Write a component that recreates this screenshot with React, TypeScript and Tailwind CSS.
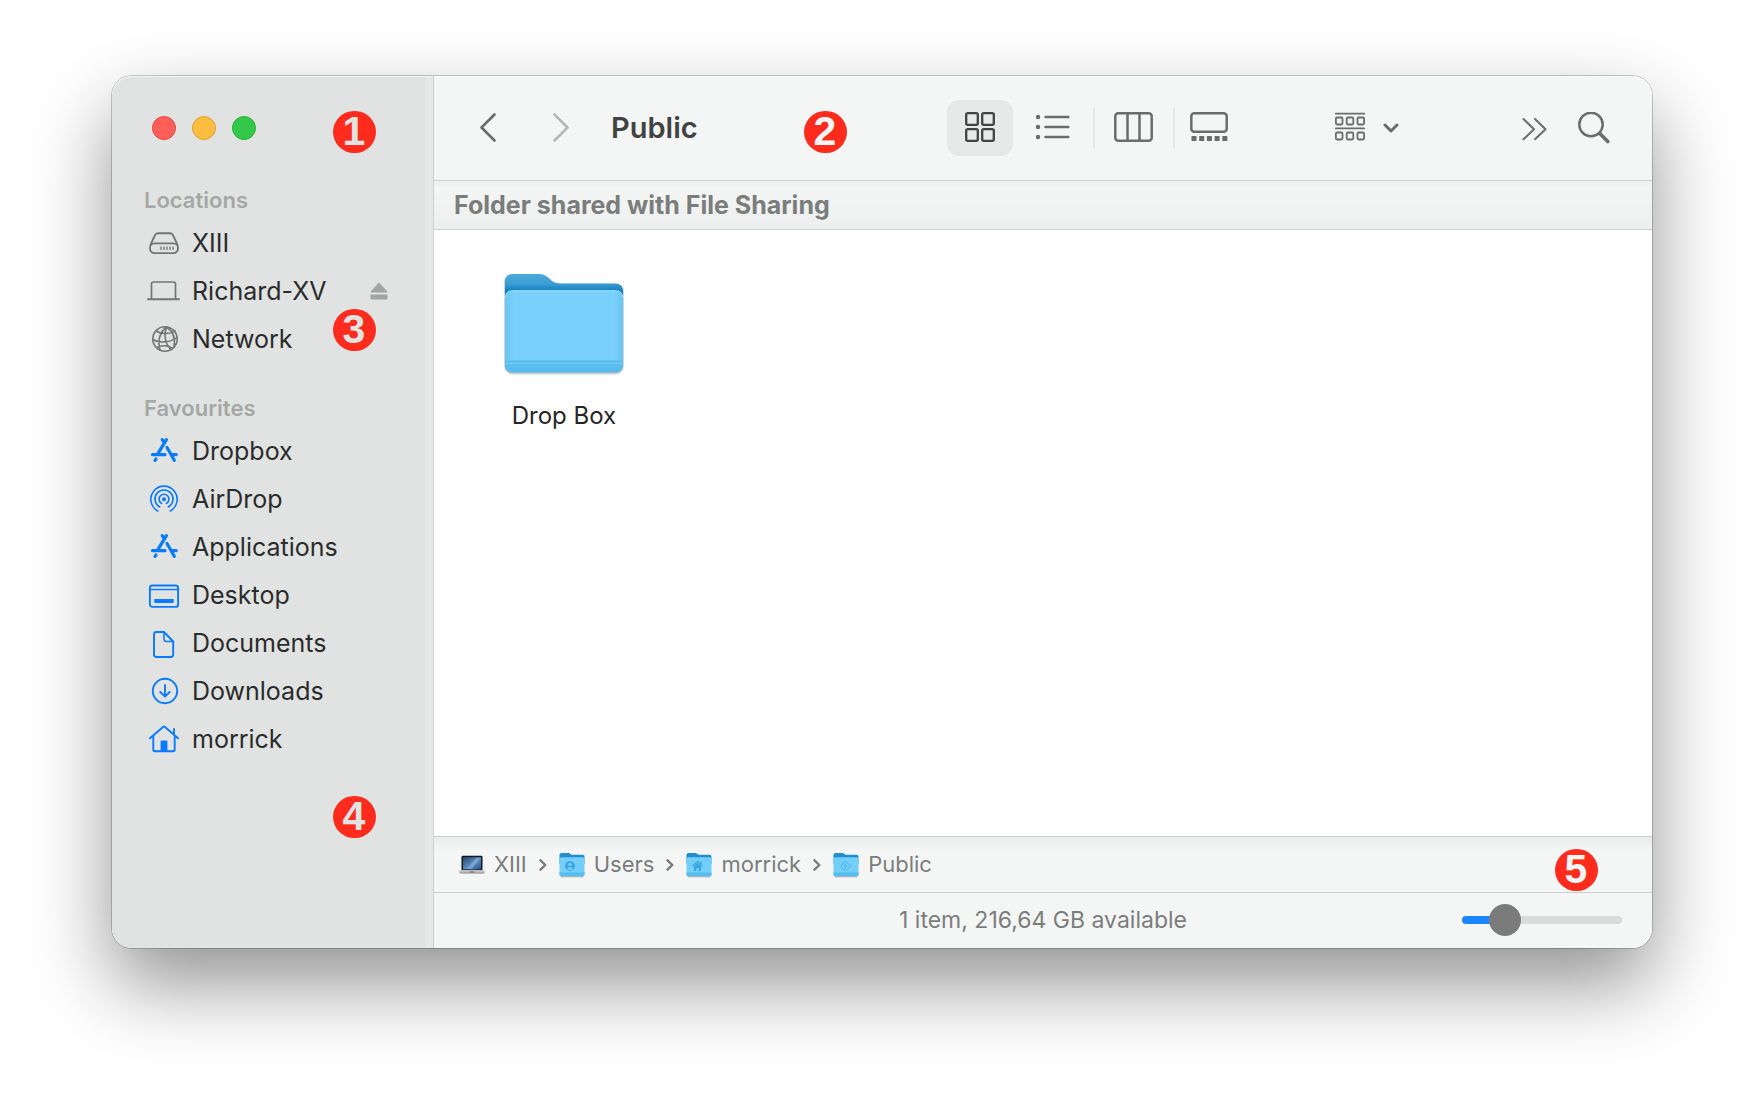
import { useState } from "react";
import type { ReactNode } from "react";

const stroke = {
  fill: "none",
  stroke: "currentColor",
  strokeLinecap: "round" as const,
  strokeLinejoin: "round" as const,
};

function SideIcon({ children }: { children: ReactNode }) {
  return (
    <svg viewBox="0 0 32 32" className="size-8 shrink-0 overflow-visible" strokeWidth="1.9" {...stroke} aria-hidden="true">
      {children}
    </svg>
  );
}

const driveIcon = (
  <SideIcon>
    <path d="M2.6 17.6 7 8.2Q7.9 6.2 10 6.2h12q2.1 0 3 2l4.400 9.400" />
    <rect x="2" y="16.400" width="28" height="9.700" rx="4.500" />
    <path d="M13 19.500v3.500M16 19.500v3.500M19 19.500v3.500M22 19.500v3.500M25 19.500v3.500" strokeWidth="1.300" strokeLinecap="butt" />
  </SideIcon>
);

const laptopIcon = (
  <SideIcon>
    <path d="M3.500 24V9Q3.500 7 5.500 7h20q2 0 2 2v15" strokeWidth="1.700" />
    <path d="M0 24.200h31" strokeWidth="2" />
  </SideIcon>
);

const globeIcon = (
  <SideIcon>
    <g strokeWidth="1.600">
      <circle cx="17" cy="16" r="12.200" />
      <path d="M18.500 4C12 9 9.500 17 12 27.200M18.500 4C15.500 12 17 21 23 26.500M18.500 4C25 8 27.500 15 26 24M8 8c5 3.500 14 3.500 19-.500M5 16.500c6 4 18 3 24-2M8.500 24.500c5-2.500 12-2.500 16 .800" />
    </g>
  </SideIcon>
);

const appsIcon = (
  <SideIcon>
    <g strokeWidth="3.200">
      <path d="M18.400 4.600 9.600 19.200M14.200 4.600l2.200 3.400M19 12.500l7.300 12.800" />
      <path d="M4.500 19.700h12.500M24 19.700h4.200M8 24 7 25.400" />
    </g>
  </SideIcon>
);

const airdropIcon = (
  <SideIcon>
    <circle cx="16" cy="16.300" r="2" fill="currentColor" stroke="none" />
    <g strokeWidth="1.600">
      <path d="M13.600 20.400a4.900 4.900 0 1 1 4.800 0" />
      <path d="M11.800 24a9 9 0 1 1 8.400 0" />
      <path d="M9.800 28a13.200 13.200 0 1 1 12.400 0" />
    </g>
  </SideIcon>
);

const desktopIcon = (
  <SideIcon>
    <rect x="1.900" y="6.500" width="28.200" height="21.400" rx="2.400" />
    <path d="M2 10.500h28" strokeWidth="1.500" />
    <rect x="6.300" y="20" width="19.400" height="4" rx="0.600" fill="currentColor" stroke="none" />
  </SideIcon>
);

const documentIcon = (
  <SideIcon>
    <path d="M6 7.500Q6 5 8.500 5H16l9.200 9.500V27.500q0 2.500-2.500 2.500H8.500Q6 30 6 27.500Z" />
    <path d="M16 5v7q0 2.500 2.500 2.500h6.500" strokeWidth="1.500" />
  </SideIcon>
);

const downloadIcon = (
  <SideIcon>
    <circle cx="17" cy="16" r="12.200" />
    <path d="M17 10v11.500M12.300 17l4.700 4.700 4.700-4.700" />
  </SideIcon>
);

const homeIcon = (
  <SideIcon>
    <path d="M2 15.300 15 4q1-.8 2 0l13 11.300" />
    <path d="M5.300 13.500V26.500q0 1.700 1.700 1.700h18q1.700 0 1.700-1.700V13.500M26 11.500V6" />
    <path d="M12.600 28V18.500q0-.900.900-.900h5q.900 0 .900.900V28Z" fill="currentColor" stroke="none" />
  </SideIcon>
);

function SidebarRow({ icon, label, eject }: { icon: ReactNode; label: string; eject?: boolean }) {
  return (
    <li className="flex h-12 items-center pr-[45px]">
      <a href={"#" + label} className="flex flex-1 items-center gap-3 text-[#2b2c2c]">
        {icon}
        <span className="pt-0.5 whitespace-nowrap">{label}</span>
      </a>
      {eject && (
        <button type="button" aria-label={"Eject " + label} className="text-[#a3a5a4]">
          <svg viewBox="0 0 18 18" className="size-[18px]" fill="currentColor" aria-hidden="true">
            <path d="M9 0.600 17.300 9.500q.3 1-.6 1H1.300q-.9 0-.6-1Z" />
            <rect x="0.500" y="12.500" width="17" height="5" rx="0.800" />
          </svg>
        </button>
      )}
    </li>
  );
}

function SidebarSection({ title, icons, children }: { title: string; icons: string; children: ReactNode }) {
  return (
    <section>
      <h2 className="flex h-[38px] items-center pl-8 text-[22px] font-semibold text-[#a5a7a6]">{title}</h2>
      <ul className={"pl-9 text-[25px] [&_a>svg]:shrink-0 " + icons}>{children}</ul>
    </section>
  );
}

function MiniFolder({ children }: { children: ReactNode }) {
  return (
    <svg viewBox="0 0 26 26" className="size-[26px]" aria-hidden="true">
      <path d="M.5 3Q.5 1 2.500 1h7.500l2.500 1.800h11q2 0 2 2V12H.5Z" fill="#1f8fce" />
      <rect x="0.500" y="5.300" width="25" height="19" rx="1.800" fill="#73cefa" />
      <path d="M.5 20.500h25v2q0 1.800-1.800 1.800H2.300Q.5 24.300.5 22.500Z" fill="#58bdee" />
      <path d="M1.500 24.800h23" stroke="#8a9aa2" strokeWidth="0.800" />
      {children}
    </svg>
  );
}

const usersFolder = (
  <MiniFolder>
    <circle cx="11" cy="14" r="5" fill="#3ba6e0" />
    <circle cx="11" cy="12.400" r="1.700" fill="#73cefa" />
    <path d="M8 17q3-4 6 0-3 2.400-6 0Z" fill="#73cefa" />
  </MiniFolder>
);

const homeFolder = (
  <MiniFolder>
    <path d="M6.500 14.200 11.500 9.300l5 4.900M15 12V9.500" fill="none" stroke="#3ba6e0" strokeWidth="1.200" />
    <path d="M8 14l3.500-3.300L15 14v5h-2.300v-3h-2.400v3H8Z" fill="#3ba6e0" />
  </MiniFolder>
);

const publicFolder = (
  <MiniFolder>
    <path d="M12.500 9l5 5-5 5-5-5Z" fill="none" stroke="#4fb3e8" strokeWidth="1" strokeLinejoin="round" />
    <path d="M12.500 11.500v5M11 13.500l1.500-1 1.500 1.500-3 1" fill="none" stroke="#4fb3e8" strokeWidth="0.800" />
  </MiniFolder>
);

const macbookIcon = (
  <svg viewBox="0 0 26 20" className="h-5 w-[26px]" aria-hidden="true">
    <defs>
      <linearGradient id="screen" x1="0" y1="0" x2="1" y2="1">
        <stop offset="0" stopColor="#27436b" />
        <stop offset="0.550" stopColor="#5b8fc4" />
        <stop offset="1" stopColor="#2a4d80" />
      </linearGradient>
    </defs>
    <rect x="2.500" y="0.800" width="21" height="14.700" rx="1.200" fill="#15181c" />
    <rect x="4" y="2.200" width="18" height="12.300" fill="url(#screen)" />
    <path d="M8 14 17 3h4l-8 11Z" fill="#a9cbe8" opacity="0.400" />
    <path d="M.3 15.500h25.400v1.500q0 1.700-1.700 1.700H2Q.3 18.700.3 17Z" fill="#a9aaac" />
    <path d="M.3 15.500h25.400v1H.3Z" fill="#dcdddd" />
    <path d="M10.500 17h5" stroke="#666" strokeWidth="1" />
  </svg>
);

function PathChevron() {
  return (
    <svg viewBox="0 0 8 12" className="h-3 w-2" strokeWidth="2.400" {...stroke} aria-hidden="true">
      <path d="M1.500 1.300 6.300 6l-4.800 4.700" />
    </svg>
  );
}

function Crumb({ icon, label }: { icon: ReactNode; label: string }) {
  return (
    <a href={"#" + label} className="flex items-center gap-[9px]">
      {icon}
      <span>{label}</span>
    </a>
  );
}

function BigFolder() {
  return (
    <svg viewBox="0 0 120 104" className="h-[104px] w-[120px]" aria-hidden="true">
      <defs>
        <linearGradient id="back" x1="0" y1="0" x2="0" y2="1">
          <stop offset="0" stopColor="#4ba9da" />
          <stop offset="0.160" stopColor="#3d9fd4" />
          <stop offset="0.280" stopColor="#1680c2" />
          <stop offset="1" stopColor="#1680c2" />
        </linearGradient>
        <linearGradient id="front" x1="0" y1="0" x2="1" y2="0">
          <stop offset="0" stopColor="#68c5f1" />
          <stop offset="0.080" stopColor="#79d1fb" />
          <stop offset="0.920" stopColor="#79d1fb" />
          <stop offset="1" stopColor="#68c5f1" />
        </linearGradient>
        <filter id="soft" x="-10%" y="-10%" width="120%" height="125%">
          <feDropShadow dx="0" dy="1" stdDeviation="1" floodColor="#000" floodOpacity="0.500" />
        </filter>
      </defs>
      <g filter="url(#soft)">
        <path d="M1 9q0-8 8-8h26q5 0 9 3.500l3 2.700q4 3.300 9 3.300h55q8 0 8 8V60H1Z" fill="url(#back)" />
        <rect x="1" y="17.300" width="118" height="82" rx="7.500" fill="url(#front)" />
      </g>
      <path d="M1.500 24.500q0-6.700 7-6.700h103q7 0 7 6.700" fill="none" stroke="#9adfff" strokeWidth="1" />
      <path d="M1 87h118v5q0 7.300-7.500 7.300h-103Q1 99.300 1 92Z" fill="#66c4f2" />
      <path d="M1 88.500h118M1 92.500h118" stroke="#55b6e7" strokeWidth="1" />
      <path d="M1.300 93.700h117.400q-1 5.600-7.200 5.600h-103q-6.200 0-7.200-5.600Z" fill="#58bbeb" />
    </svg>
  );
}

function Badge({ n, place }: { n: number; place: string }) {
  return (
    <span
      className={
        "absolute flex h-[42px] w-[43px] items-center justify-center rounded-full bg-[#ff2b1c] pr-px pb-0.5 font-['Liberation_Sans',sans-serif] text-[41px] leading-none font-bold " +
        place
      }
    >
      {n}
    </span>
  );
}

export default function App() {
  const [size, setSize] = useState(21);
  // The thumb is 32px wide on a 160px track, so its centre travels from 10% to 90%.
  const filled = 10 + size * 0.8;

  return (
    <div className="flex min-h-screen bg-white px-28 pt-[76px] pb-[148px] font-[Inter,'Open_Sans',sans-serif]">
      <div className="relative flex flex-1 rounded-[20px] shadow-[0_0_0_1px_rgba(0,0,0,0.2),0_36px_80px_rgba(0,0,0,0.43)]">
        <aside className="flex w-[322px] shrink-0 flex-col rounded-l-[20px] border-r border-[#cfd1d0] bg-[#e1e3e2] shadow-[inset_0_1px_0_#f4f5f5,inset_-8px_0_0_#e6e8e7]">
          <div className="flex h-[105px] items-center gap-4 pb-0.5 pl-10">
            <button type="button" aria-label="Close" className="size-6 rounded-full border border-[#e2463f] bg-[#fe5f58]" />
            <button type="button" aria-label="Minimise" className="size-6 rounded-full border border-[#e1a12f] bg-[#febc40]" />
            <button type="button" aria-label="Zoom" className="size-6 rounded-full border border-[#29ac3a] bg-[#34c84a]" />
          </div>
          <nav aria-label="Sidebar" className="flex flex-col gap-[26px]">
            <SidebarSection title="Locations" icons="[&_a>svg]:text-[#747675]">
              <SidebarRow icon={driveIcon} label="XIII" />
              <SidebarRow icon={laptopIcon} label="Richard-XV" eject />
              <SidebarRow icon={globeIcon} label="Network" />
            </SidebarSection>
            <SidebarSection title="Favourites" icons="[&_a>svg]:text-[#0a7aff]">
              <SidebarRow icon={appsIcon} label="Dropbox" />
              <SidebarRow icon={airdropIcon} label="AirDrop" />
              <SidebarRow icon={appsIcon} label="Applications" />
              <SidebarRow icon={desktopIcon} label="Desktop" />
              <SidebarRow icon={documentIcon} label="Documents" />
              <SidebarRow icon={downloadIcon} label="Downloads" />
              <SidebarRow icon={homeIcon} label="morrick" />
            </SidebarSection>
          </nav>
        </aside>

        <main className="flex min-w-0 flex-1 flex-col overflow-hidden rounded-r-[20px] bg-white">
          <header className="flex h-[105px] items-center border-b border-[#cfd1d0] bg-[#f4f6f5] pr-[41px] pl-11 text-[#6b6d6c] shadow-[inset_0_1px_0_#fff]">
            <button type="button" aria-label="Back" className="text-[#6b6d6c]">
              <svg viewBox="0 0 20 32" className="h-8 w-5" strokeWidth="2.700" {...stroke} aria-hidden="true">
                <path d="M16.500 2.500 3.500 15.500l13 13" />
              </svg>
            </button>
            <button type="button" aria-label="Forward" className="ml-[53px] text-[#b6b8b7]">
              <svg viewBox="0 0 20 32" className="h-8 w-5" strokeWidth="2.700" {...stroke} aria-hidden="true">
                <path d="M3.500 2.500l13 13-13 13" />
              </svg>
            </button>
            <h1 className="ml-10 text-[29px] leading-8 font-semibold text-[#414342]">Public</h1>

            <div className="ml-auto flex items-center">
              <button type="button" aria-label="Icon view" className="flex h-14 w-[66px] items-center justify-center rounded-xl bg-[#e7e9e8] text-[#424443]">
                <svg viewBox="0 0 32 32" className="size-8" strokeWidth="2.300" {...stroke} aria-hidden="true">
                  <rect x="2.200" y="1.200" width="11.600" height="11.600" rx="1.600" />
                  <rect x="18.200" y="1.200" width="11.600" height="11.600" rx="1.600" />
                  <rect x="2.200" y="17.200" width="11.600" height="11.600" rx="1.600" />
                  <rect x="18.200" y="17.200" width="11.600" height="11.600" rx="1.600" />
                </svg>
              </button>
              <button type="button" aria-label="List view" className="flex h-14 w-20 items-center justify-center">
                <svg viewBox="0 0 36 32" className="h-8 w-9" strokeWidth="2.400" {...stroke} aria-hidden="true">
                  <path d="M10.500 5h22.800M10.500 15h22.800M10.500 25h22.800" />
                  <g fill="currentColor" stroke="none">
                    <circle cx="3" cy="5" r="2.200" />
                    <circle cx="3" cy="15" r="2.200" />
                    <circle cx="3" cy="25" r="2.200" />
                  </g>
                </svg>
              </button>
              <span className="h-10 w-0.5 bg-[#e5e7e6]" />
              <button type="button" aria-label="Column view" className="flex h-14 w-[78px] items-center justify-center">
                <svg viewBox="0 0 40 32" className="h-8 w-10" strokeWidth="2.500" {...stroke} aria-hidden="true">
                  <rect x="1.300" y="1.300" width="36.400" height="27.400" rx="3" />
                  <path d="M13.500 1.300v27.400M25.500 1.300v27.400" />
                </svg>
              </button>
              <span className="h-10 w-0.5 bg-[#e5e7e6]" />
              <button type="button" aria-label="Gallery view" className="flex h-14 w-[68px] items-center justify-center">
                <svg viewBox="0 0 38 32" className="h-8 w-[38px]" strokeWidth="2.500" {...stroke} aria-hidden="true">
                  <rect x="1.300" y="1.300" width="35.400" height="18.400" rx="3" />
                  <path d="M1.500 24h5v5h-5zM9.200 24h5v5h-5zM16.900 24h5v5h-5zM24.600 24h5v5h-5zM32.300 24h5v5h-5z" fill="currentColor" stroke="none" />
                </svg>
              </button>
            </div>

            <button type="button" aria-label="Group items" className="ml-[92px] flex items-center gap-[18px]">
              <svg viewBox="0 0 30 32" className="h-8 w-[30px]" strokeWidth="1.800" {...stroke} aria-hidden="true">
                <path d="M.8 1.600h28.400M.8 16.300h28.400" />
                <rect x="0.900" y="5.500" width="6.600" height="7" rx="1.200" />
                <rect x="11.700" y="5.500" width="6.600" height="7" rx="1.200" />
                <rect x="22.500" y="5.500" width="6.600" height="7" rx="1.200" />
                <rect x="0.900" y="20.500" width="6.600" height="7" rx="1.200" />
                <rect x="11.700" y="20.500" width="6.600" height="7" rx="1.200" />
                <rect x="22.500" y="20.500" width="6.600" height="7" rx="1.200" />
              </svg>
              <svg viewBox="0 0 16 10" className="h-2.5 w-4" strokeWidth="3" {...stroke} aria-hidden="true">
                <path d="M2 2l6 6 6-6" />
              </svg>
            </button>
            <button type="button" aria-label="More toolbar items" className="ml-[122px]">
              <svg viewBox="0 0 26 32" className="h-8 w-[26px]" strokeWidth="2" {...stroke} aria-hidden="true">
                <path d="M2.500 7 13 17.200 2.500 27.300M14 7l10.500 10.200L14 27.300" />
              </svg>
            </button>
            <button type="button" aria-label="Search" className="ml-[30px]">
              <svg viewBox="0 0 34 32" className="h-8 w-[34px]" {...stroke} aria-hidden="true">
                <circle cx="14" cy="12.500" r="11.700" strokeWidth="2.500" />
                <path d="M22.800 21.500l8 8" strokeWidth="3.600" />
              </svg>
            </button>
          </header>

          <div className="flex h-[49px] items-center border-b border-[#cdcfce] bg-linear-to-b from-[#eef0ef] via-[#f4f6f5] via-15% to-[#ecefee] px-5 pt-0.5 text-[25px] font-bold text-[#7b7d7c]">
            Folder shared with File Sharing
          </div>

          <div className="flex flex-1 items-start px-[70px] pt-[43px]">
            <a href="#Drop-Box" className="flex flex-col items-center gap-[23px] text-2xl text-[#262626]">
              <BigFolder />
              <span>Drop Box</span>
            </a>
          </div>

          <nav aria-label="Path" className="flex h-14 items-center gap-3 border-t border-[#cdcfce] bg-linear-to-b from-[#eaecec] to-[#f4f6f5] to-25% px-[25px] text-[22px] text-[#7b7d7c]">
            <Crumb icon={macbookIcon} label="XIII" />
            <PathChevron />
            <Crumb icon={usersFolder} label="Users" />
            <PathChevron />
            <Crumb icon={homeFolder} label="morrick" />
            <PathChevron />
            <Crumb icon={publicFolder} label="Public" />
          </nav>

          <footer className="grid h-14 grid-cols-[1fr_auto_1fr] items-center border-t border-[#cdcfce] bg-[#f4f6f5] px-[30px] text-[23px] text-[#7b7d7c]">
            <span className="col-start-2">1 item, 216,64 GB available</span>
            <input
              type="range"
              aria-label="Icon size"
              min={0}
              max={100}
              value={size}
              onChange={(e) => setSize(Number(e.target.value))}
              style={{ backgroundImage: `linear-gradient(to right, #1a86ff ${filled}%, #dadcdb ${filled}%)` }}
              className="mb-0.5 h-2 w-40 appearance-none justify-self-end rounded-full [&::-webkit-slider-thumb]:size-8 [&::-webkit-slider-thumb]:appearance-none [&::-webkit-slider-thumb]:rounded-full [&::-webkit-slider-thumb]:bg-[#7b7b7b]"
            />
          </footer>
        </main>

        <Badge n={1} place="top-[35px] left-[221px] text-[#e1e3e2]" />
        <Badge n={2} place="top-[35px] left-[692px] text-[#f4f6f5]" />
        <Badge n={3} place="top-[233px] left-[221px] text-[#e1e3e2]" />
        <Badge n={4} place="bottom-[110px] left-[221px] text-[#e1e3e2]" />
        <Badge n={5} place="right-[54px] bottom-[57px] text-[#f4f6f5]" />
      </div>
    </div>
  );
}
